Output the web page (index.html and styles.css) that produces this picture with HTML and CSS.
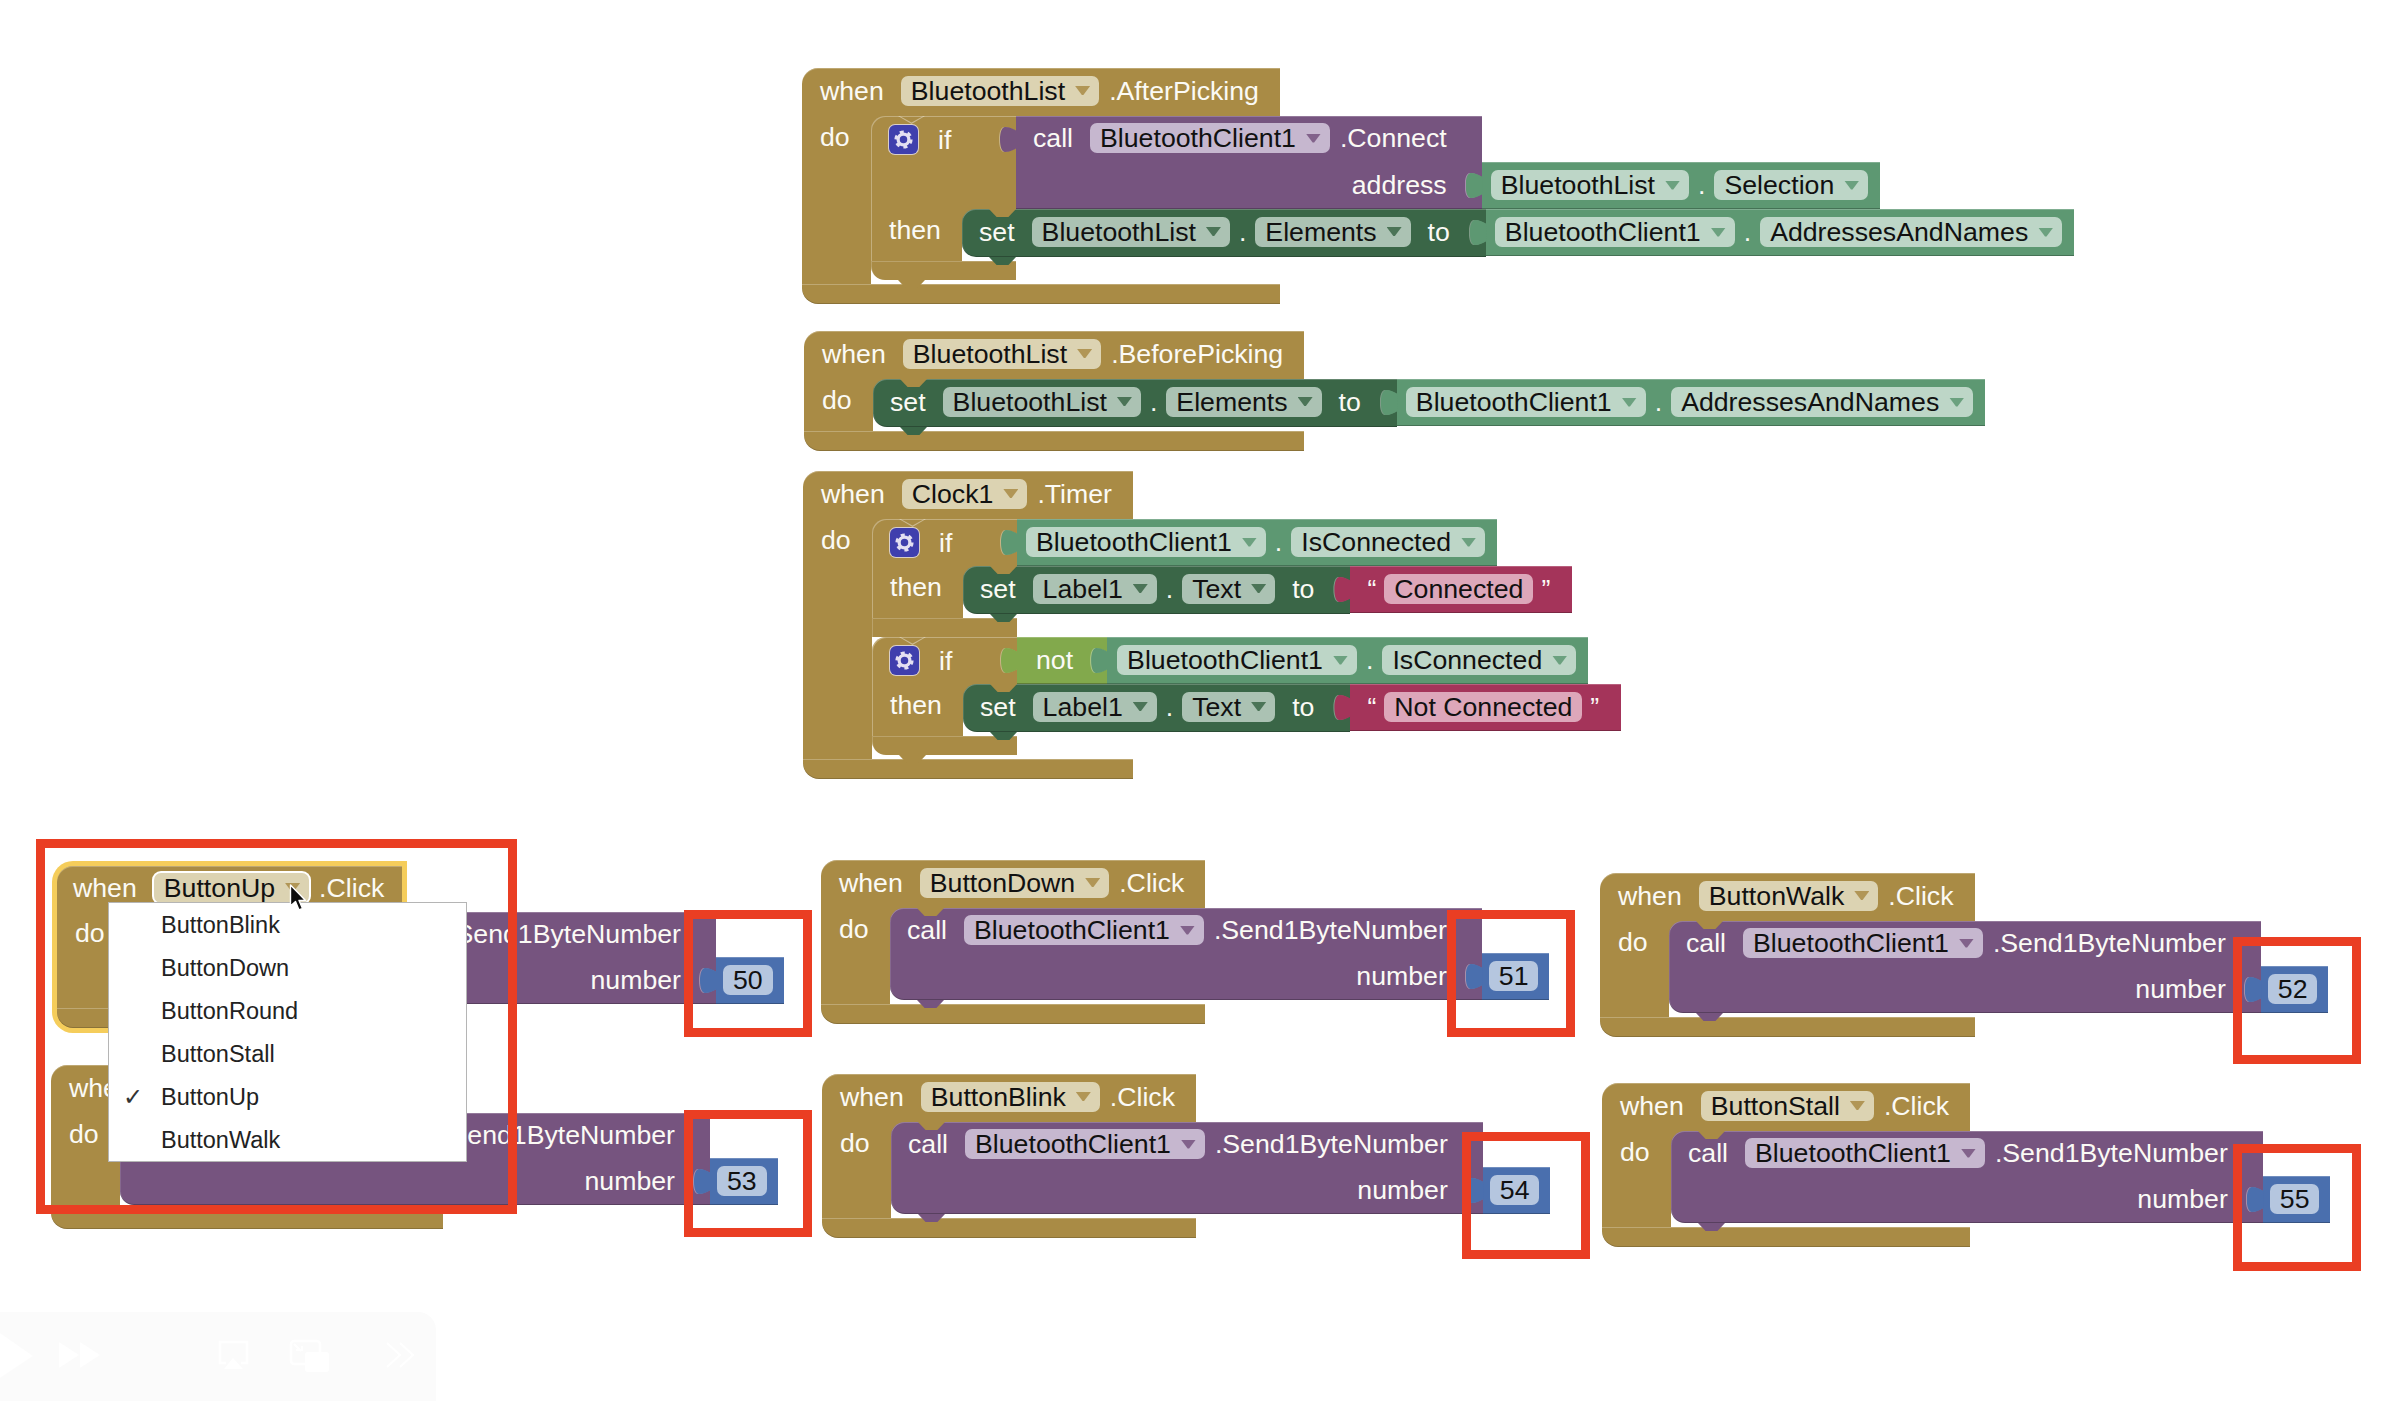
FILE: index.html
```html
<!DOCTYPE html>
<html lang="en">
<head>
<meta charset="utf-8">
<title>Blocks</title>
<link rel="stylesheet" href="styles.css">
</head>
<body>
<main class="canvas">
<svg class="defs" width="0" height="0" aria-hidden="true"><defs>
  <symbol id="gear" viewBox="0 0 24 24">
    <circle cx="12" cy="12" r="5.6" fill="none" stroke="#e4e0f2" stroke-width="3.4"/>
    <circle cx="12" cy="12" r="8" fill="none" stroke="#e4e0f2" stroke-width="3" stroke-dasharray="4.2 4.18"/>
  </symbol>
</defs></svg>

<!-- AfterPicking -->
<section class="event ochre p1">
  <div class="row head"><span class="kw">when</span><span class="f">BluetoothList</span><span class="t">.AfterPicking</span></div>
  <div class="body">
    <div class="do">do</div>
    <div class="slot">
      <div class="if ochre">
        <div class="if-test">
          <div class="if-head"><svg class="gear"><use href="#gear"/></svg><span>if</span></div>
          <div class="attach">
            <div class="block val purple tall">
              <div class="row call"><span class="kw">call</span><span class="f">BluetoothClient1</span><span class="t">.Connect</span></div>
              <div class="row call arg"><span>address</span></div>
            </div>
            <div class="block val teal"><div class="row v"><span class="f">BluetoothList</span><span class="dot">.</span><span class="f">Selection</span></div></div>
          </div>
        </div>
        <div class="if-then">
          <div class="then">then</div>
          <div class="slot">
            <div class="attach top">
              <div class="block stmt dgreen"><div class="row set"><span class="kw">set</span><span class="f">BluetoothList</span><span class="dot">.</span><span class="f">Elements</span><span class="to">to</span></div></div>
              <div class="block val teal"><div class="row v"><span class="f">BluetoothClient1</span><span class="dot">.</span><span class="f">AddressesAndNames</span></div></div>
            </div>
          </div>
        </div>
        <div class="if-foot"></div>
      </div>
    </div>
  </div>
  <div class="foot"></div>
</section>

<!-- BeforePicking -->
<section class="event ochre p2">
  <div class="row head"><span class="kw">when</span><span class="f">BluetoothList</span><span class="t">.BeforePicking</span></div>
  <div class="body">
    <div class="do">do</div>
    <div class="slot">
      <div class="attach top">
        <div class="block stmt dgreen"><div class="row set"><span class="kw">set</span><span class="f">BluetoothList</span><span class="dot">.</span><span class="f">Elements</span><span class="to">to</span></div></div>
        <div class="block val teal"><div class="row v"><span class="f">BluetoothClient1</span><span class="dot">.</span><span class="f">AddressesAndNames</span></div></div>
      </div>
    </div>
  </div>
  <div class="foot"></div>
</section>

<!-- Timer -->
<section class="event ochre p3">
  <div class="row head"><span class="kw">when</span><span class="f">Clock1</span><span class="t">.Timer</span></div>
  <div class="body">
    <div class="do">do</div>
    <div class="slot">
      <div class="if ochre mid">
        <div class="if-test">
          <div class="if-head"><svg class="gear"><use href="#gear"/></svg><span>if</span></div>
          <div class="block val teal"><div class="row v"><span class="f">BluetoothClient1</span><span class="dot">.</span><span class="f">IsConnected</span></div></div>
        </div>
        <div class="if-then">
          <div class="then">then</div>
          <div class="slot">
            <div class="attach top">
              <div class="block stmt dgreen"><div class="row set"><span class="kw">set</span><span class="f">Label1</span><span class="dot">.</span><span class="f">Text</span><span class="to">to</span></div></div>
              <div class="block val rose"><div class="row s"><span>“</span><span class="f plain">Connected</span><span>”</span></div></div>
            </div>
          </div>
        </div>
        <div class="if-foot"></div>
      </div>
      <div class="if ochre">
        <div class="if-test">
          <div class="if-head"><svg class="gear"><use href="#gear"/></svg><span>if</span></div>
          <div class="block val lime"><div class="row n"><span>not</span></div></div>
          <div class="block val teal"><div class="row v wide"><span class="f">BluetoothClient1</span><span class="dot">.</span><span class="f">IsConnected</span></div></div>
        </div>
        <div class="if-then">
          <div class="then">then</div>
          <div class="slot">
            <div class="attach top">
              <div class="block stmt dgreen"><div class="row set"><span class="kw">set</span><span class="f">Label1</span><span class="dot">.</span><span class="f">Text</span><span class="to">to</span></div></div>
              <div class="block val rose"><div class="row s"><span>“</span><span class="f plain">Not Connected</span><span>”</span></div></div>
            </div>
          </div>
        </div>
        <div class="if-foot"></div>
      </div>
    </div>
  </div>
  <div class="foot"></div>
</section>

<!-- ButtonUp (selected): its call block runs under the menu -->
<section class="event ochre p4 sel">
  <div class="row head"><span class="kw">when</span><span class="f on">ButtonUp</span><span class="t">.Click</span></div>
  <div class="body">
    <div class="do">do</div>
    <div class="slot">
      <div class="attach">
        <div class="block stmt purple under">
          <div class="row call arg"><span>.Send1ByteNumber</span></div>
          <div class="row call arg"><span>number</span></div>
        </div>
        <div class="block val blue"><div class="row num"><span class="f plain">50</span></div></div>
      </div>
    </div>
  </div>
  <div class="foot"></div>
</section>

<!-- Second block under the menu -->
<section class="event ochre p5">
  <div class="row head short"><span class="kw">when</span></div>
  <div class="body">
    <div class="do">do</div>
    <div class="slot">
      <div class="attach">
        <div class="block stmt purple under">
          <div class="row call arg"><span>.Send1ByteNumber</span></div>
          <div class="row call arg"><span>number</span></div>
        </div>
        <div class="block val blue"><div class="row num"><span class="f plain">53</span></div></div>
      </div>
    </div>
  </div>
  <div class="foot"></div>
</section>

<!-- ButtonDown -->
<section class="event ochre p6">
  <div class="row head"><span class="kw">when</span><span class="f">ButtonDown</span><span class="t">.Click</span></div>
  <div class="body">
    <div class="do">do</div>
    <div class="slot">
      <div class="attach">
        <div class="block stmt purple">
          <div class="row call"><span class="kw">call</span><span class="f">BluetoothClient1</span><span class="t">.Send1ByteNumber</span></div>
          <div class="row call arg"><span>number</span></div>
        </div>
        <div class="block val blue"><div class="row num"><span class="f plain">51</span></div></div>
      </div>
    </div>
  </div>
  <div class="foot"></div>
</section>

<!-- ButtonBlink -->
<section class="event ochre p7">
  <div class="row head"><span class="kw">when</span><span class="f">ButtonBlink</span><span class="t">.Click</span></div>
  <div class="body">
    <div class="do">do</div>
    <div class="slot">
      <div class="attach">
        <div class="block stmt purple">
          <div class="row call"><span class="kw">call</span><span class="f">BluetoothClient1</span><span class="t">.Send1ByteNumber</span></div>
          <div class="row call arg"><span>number</span></div>
        </div>
        <div class="block val blue"><div class="row num"><span class="f plain">54</span></div></div>
      </div>
    </div>
  </div>
  <div class="foot"></div>
</section>

<!-- ButtonWalk -->
<section class="event ochre p8">
  <div class="row head"><span class="kw">when</span><span class="f">ButtonWalk</span><span class="t">.Click</span></div>
  <div class="body">
    <div class="do">do</div>
    <div class="slot">
      <div class="attach">
        <div class="block stmt purple">
          <div class="row call"><span class="kw">call</span><span class="f">BluetoothClient1</span><span class="t">.Send1ByteNumber</span></div>
          <div class="row call arg"><span>number</span></div>
        </div>
        <div class="block val blue"><div class="row num"><span class="f plain">52</span></div></div>
      </div>
    </div>
  </div>
  <div class="foot"></div>
</section>

<!-- ButtonStall -->
<section class="event ochre p9">
  <div class="row head"><span class="kw">when</span><span class="f">ButtonStall</span><span class="t">.Click</span></div>
  <div class="body">
    <div class="do">do</div>
    <div class="slot">
      <div class="attach">
        <div class="block stmt purple">
          <div class="row call"><span class="kw">call</span><span class="f">BluetoothClient1</span><span class="t">.Send1ByteNumber</span></div>
          <div class="row call arg"><span>number</span></div>
        </div>
        <div class="block val blue"><div class="row num"><span class="f plain">55</span></div></div>
      </div>
    </div>
  </div>
  <div class="foot"></div>
</section>

<!-- Dropdown menu -->
<ul class="menu">
  <li class="mi">ButtonBlink</li>
  <li class="mi">ButtonDown</li>
  <li class="mi">ButtonRound</li>
  <li class="mi">ButtonStall</li>
  <li class="mi checked">ButtonUp</li>
  <li class="mi">ButtonWalk</li>
</ul>

<svg class="cursor" viewBox="0 0 18 28" aria-hidden="true">
  <path d="M1.5 1 L1.5 22 L6.5 17.5 L10 26 L13.5 24.5 L10 16.5 L16.5 16.5 Z" fill="#0c0c0c" stroke="#fff" stroke-width="1.4" stroke-linejoin="round"/>
</svg>

<!-- Annotation frames -->
<div class="red r0"></div>
<div class="red r1"></div>
<div class="red r2"></div>
<div class="red r3"></div>
<div class="red r4"></div>
<div class="red r5"></div>
<div class="red r6"></div>

<!-- Faded video controls -->
<div class="player">
  <svg class="player-icons" viewBox="0 0 436 89" aria-hidden="true">
    <path d="M0 21 L33 44 L0 66 Z" fill="#fff"/>
    <path d="M59 30 L79 43 L59 56 Z M80 30 L100 43 L80 56 Z" fill="#fff"/>
    <path d="M226 51 H220 V30 H247 V51 H241" fill="none" stroke="#fff" stroke-width="2.5"/>
    <path d="M233 46 L243 57 H224 Z" fill="#fff"/>
    <rect x="291" y="29" width="29" height="23" rx="3" fill="none" stroke="#fff" stroke-width="2.5"/>
    <rect x="305" y="40" width="24" height="20" rx="3" fill="#fff"/>
    <path d="M294 32 L301 39 M296 38 H302 V34" fill="none" stroke="#fff" stroke-width="2"/>
    <path d="M387 31 L400 43 L387 55 M400 31 L413 43 L400 55" fill="none" stroke="#fff" stroke-width="2"/>
  </svg>
</div>
</main>
</body>
</html>
```
FILE: styles.css
```css
* { box-sizing: border-box; }
html, body { margin: 0; padding: 0; background: #fff; }

.canvas {
  position: relative;
  width: 2400px;
  height: 1401px;
  overflow: hidden;
  background: #fff;
  font-family: "Liberation Sans", Arial, sans-serif;
  font-size: 26.7px;
  line-height: 30px;
  color: #fbfaf5;
  white-space: nowrap;
}
.defs { position: absolute; }

/* palette */
.ochre  { --c: #a98b45; --f: #dcd3b2; }
.purple { --c: #76547f; --f: #c6b7cf; }
.dgreen { --c: #3a6647; --f: #abc2b3; }
.teal   { --c: #5d9872; --f: #bdd6c7; }
.rose   { --c: #a4345a; --f: #dda7ba; }
.blue   { --c: #4a6fae; --f: #b5c6df; }
.lime   { --c: #82a94c; --f: #cfe0b5; }

/* event blocks: free canvas placement */
.event { position: absolute; width: max-content; z-index: 0; }
.p1 { left: 802px; top: 68px; }
.p2 { left: 804px; top: 331px; }
.p3 { left: 803px; top: 471px; }
.p4 { left: 57px;  top: 866px; }
.p5 { left: 51px;  top: 1065px; }
.p6 { left: 821px; top: 860px; }
.p7 { left: 822px; top: 1074px; }
.p8 { left: 1600px; top: 873px; }
.p9 { left: 1602px; top: 1083px; }

.sel::before {
  content: "";
  position: absolute;
  inset: -5px;
  background: #f5cd5b;
  border-radius: 21px 0 0 21px;
  z-index: -1;
}

.row { display: flex; align-items: center; }
.head {
  height: 48px;
  padding: 0 21px 3px 18px;
  background: var(--c);
  border-radius: 16px 0 0 0;
  box-shadow: inset 0 1px rgba(255, 255, 255, .25);
}
.p4 .head { height: 46px; padding-left: 16px; padding-right: 18px; }
.head.short { width: 392px; }

.body { display: flex; width: 0; min-width: 100%; }
.do {
  flex: none;
  width: 69px;
  padding: 6px 0 0 18px;
  background: var(--c);
}
.slot {
  flex: none;
  width: max-content;
  padding-bottom: 4px;
  background: linear-gradient(#a98b45, #a98b45) top left / 20px 20px no-repeat;
}
.foot {
  height: 20px;
  background: var(--c);
  border-radius: 0 0 0 16px;
  box-shadow: inset 0 -1px rgba(0, 0, 0, .18), inset 0 1px rgba(255, 255, 255, .25);
}

/* generic blocks */
.attach { display: flex; align-items: flex-end; }
.attach.top { align-items: flex-start; }

.block {
  position: relative;
  flex: none;
  width: max-content;
  background: var(--c);
  box-shadow: inset 0 1px rgba(255, 255, 255, .22), inset 0 -1px rgba(0, 0, 0, .25);
}
.block.under { width: 590px; }

.stmt {
  border-radius: 14px 0 0 14px;
  box-shadow: inset 0 1px rgba(255, 255, 255, .22), inset 0 -1px rgba(0, 0, 0, .25), inset 1px 0 rgba(255, 255, 255, .12);
}
.stmt::before, .stmt::after, .if::after {
  content: "";
  position: absolute;
  left: 27px;
  width: 27px;
  height: 8px;
  clip-path: polygon(0 0, 100% 0, 72% 100%, 28% 100%);
}
.stmt::before { top: 0; background: #a98b45; }
.stmt::after, .if::after { top: 100%; background: var(--c); }

/* value tab */
.val::before, .val::after {
  content: "";
  position: absolute;
  top: 11px;
  width: 17px;
  height: 25px;
  clip-path: path("M17 4 C13 2 10 0 5 0 C2 0 0 5 0 12.5 C0 20 2 25 5 25 C10 25 13 23 17 21 Z");
}
.val::before { left: -17px; background: rgba(255, 255, 255, .35); }
.val::after { left: -16px; background: var(--c); }

/* rows */
.call { height: 46px; padding: 0 35px 2px 17px; }
.call.arg { justify-content: flex-end; }
.tall .arg { height: 47px; }
.set { height: 48px; padding: 0 36px 3px 17px; }
.v { height: 47px; padding: 0 12px 1px 9px; }
.v.wide { padding-left: 10px; }
.s { height: 47px; padding: 0 22px 1px 17px; gap: 8px; }
.n { height: 47px; padding: 0 34px 1px 19px; }
.num { height: 47px; padding: 0 11px 1px 7px; }

/* labels */
.kw { margin-right: 17px; }
.t { margin-left: 10px; }
.dot { margin: 0 9px; }
.to { margin-left: 17px; }

/* dropdown fields */
.f {
  display: flex;
  align-items: center;
  gap: 10px;
  height: 30px;
  padding: 0 9px 0 10px;
  border-radius: 7px;
  background: var(--f);
  color: #111;
}
.f::after {
  content: "";
  flex: none;
  width: 15px;
  height: 9px;
  background: var(--c);
  opacity: .85;
  clip-path: polygon(0 0, 100% 0, 55% 100%, 45% 100%);
}
.f.plain { padding: 0 10px; }
.f.plain::after { display: none; }
.f.on { box-shadow: 0 0 0 2px #fff; }

/* if block */
.if { position: relative; width: 145px; }
.if::before {
  content: "";
  position: absolute;
  z-index: 1;
  top: 0;
  left: 27px;
  width: 27px;
  height: 8px;
  background: rgba(255, 255, 255, .4);
  clip-path: polygon(0 0, 6% 0, 50% 80%, 94% 0, 100% 0, 50% 100%);
}
.if-test { display: flex; width: max-content; }
.if-head {
  flex: none;
  width: 145px;
  display: flex;
  align-items: flex-start;
  gap: 20px;
  padding: 9px 0 0 18px;
  background: var(--c);
  border-radius: 14px 0 0 0;
  box-shadow: inset 1px 1px rgba(255, 255, 255, .3);
}
.gear {
  flex: none;
  width: 29px;
  height: 29px;
  padding: 3px;
  background: #3f3fad;
  border-radius: 6px;
  box-shadow: 0 0 0 1px rgba(235, 230, 245, .75);
}
.if-then { display: flex; width: max-content; }
.then {
  flex: none;
  width: 91px;
  padding: 6px 0 0 18px;
  background: var(--c);
  box-shadow: inset 1px 0 rgba(255, 255, 255, .3);
}
.if-foot {
  height: 19px;
  background: var(--c);
  border-radius: 0 0 0 14px;
  box-shadow: inset 1px 1px rgba(255, 255, 255, .2);
}
.mid .if-foot { border-radius: 0; }

/* dropdown menu overlay */
.menu {
  position: absolute;
  z-index: 5;
  left: 108px;
  top: 902px;
  width: 359px;
  height: 260px;
  margin: 0;
  padding: 1px 0 0;
  list-style: none;
  background: #fff;
  border: 1px solid #b5b5b5;
  color: #222;
  font-size: 23.5px;
}
.mi {
  position: relative;
  height: 43px;
  line-height: 43px;
  padding-left: 52px;
}
.checked::before {
  content: "✓";
  position: absolute;
  left: 14px;
  font-family: "DejaVu Sans", sans-serif;
  font-size: 24px;
  color: #333;
}

.cursor {
  position: absolute;
  z-index: 6;
  left: 289px;
  top: 884px;
  width: 18px;
  height: 28px;
}

/* red annotation frames */
.red {
  position: absolute;
  z-index: 7;
  border: 9px solid #ea3e23;
  width: 128px;
  height: 127px;
}
.r0 { left: 36px; top: 839px; width: 481px; height: 375px; }
.r1 { left: 684px; top: 910px; }
.r2 { left: 684px; top: 1110px; }
.r3 { left: 1447px; top: 910px; }
.r4 { left: 1462px; top: 1132px; }
.r5 { left: 2233px; top: 937px; }
.r6 { left: 2233px; top: 1144px; }

/* faded player controls */
.player {
  position: absolute;
  left: 0;
  bottom: 0;
  width: 436px;
  height: 89px;
  background: #fbfbfb;
  border-radius: 0 18px 0 0;
}
.player-icons { display: block; width: 436px; height: 89px; }
```
